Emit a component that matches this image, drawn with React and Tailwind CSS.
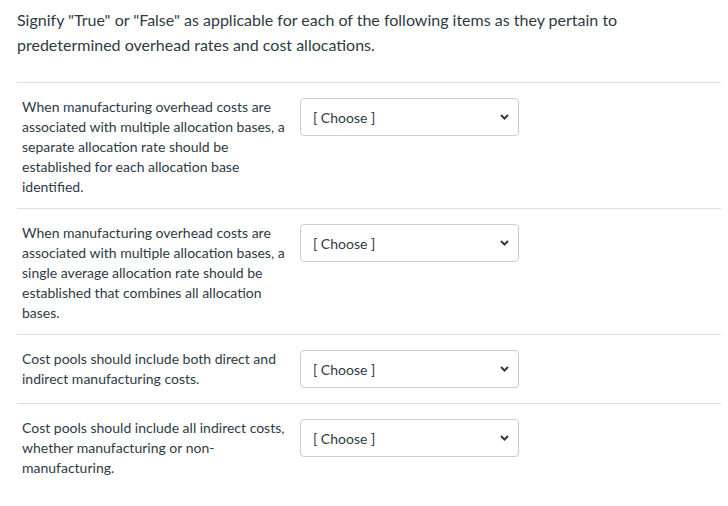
import React from 'react';

const items = [
    'When manufacturing overhead costs are associated with multiple allocation bases, a separate allocation rate should be established for each allocation base identified.',
    'When manufacturing overhead costs are associated with multiple allocation bases, a single average allocation rate should be established that combines all allocation bases.',
    'Cost pools should include both direct and indirect manufacturing costs.',
    'Cost pools should include all indirect costs, whether manufacturing or non-manufacturing.',
];

const Chevron = () => (
    <svg width="9" height="6" viewBox="0 0 9 6" className="text-[#2d3b45]">
        <path d="M1 1 L4.5 4.5 L8 1" fill="none" stroke="currentColor" strokeWidth="2" />
    </svg>
);

const ChooseBox = () => (
    <div className="mt-[1px] mb-[4px] flex h-[38px] w-[219px] shrink-0 items-center justify-between rounded-[4px] border border-[#c7cdd1] bg-white pl-[12px] pr-[9px]">
        <span className="text-[14px] text-[#2d3b45]">[ Choose ]</span>
        <Chevron />
    </div>
);

export default function App() {
    return (
        <div className="min-h-[506px] bg-white pl-[17px] pr-[7px] pt-[7px] text-[#2d3b45]" style={{ fontFamily: 'Lato, "Noto Sans", sans-serif' }}>
            {/* question text */}
            <p className="text-[16px] leading-[25px]">
                Signify "True" or "False" as applicable for each of the following items as they pertain to predetermined overhead rates and cost allocations.
            </p>

            <div className="mt-[25px]">
                {items.map((text, i) => (
                    <div key={i} className="flex items-start border-t border-[#dcdfe1] pb-[11px] pt-[14px]">
                        <p className="ml-[5px] w-[270px] shrink-0 text-[14px] leading-[20px]">{text}</p>
                        <div className="ml-[8px]">
                            <ChooseBox />
                        </div>
                    </div>
                ))}
            </div>
        </div>
    );
}
